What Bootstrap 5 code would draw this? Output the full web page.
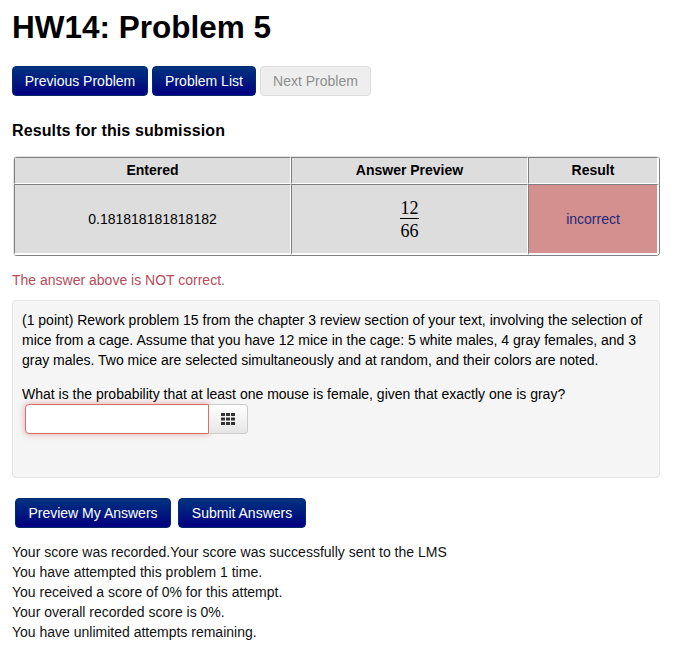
<!DOCTYPE html>
<html lang="en"><head><meta charset="utf-8"><title>HW14: Problem 5</title>
<link href="https://cdn.jsdelivr.net/npm/bootstrap@5.3.0/dist/css/bootstrap.min.css" rel="stylesheet">
<style>
body{font-family:"Liberation Sans",Arial,sans-serif;font-size:14px;line-height:20px;color:#000;background:#fff;padding:0 12px;overflow:hidden}
.hw-title{font-family:"Liberation Sans",sans-serif;font-size:31.5px;line-height:40px;font-weight:700;margin:7px 0 19px}
.hw-btn{font-size:14px;line-height:20px;padding:4px 0;border-radius:4px;border:1px solid #002a6c;color:#fff;background:linear-gradient(#00337f,#00007f)}
.hw-btn:hover{color:#fff}
.hw-off{color:#8f8f8f;background:#eee;border-color:#ddd}
.w-prev{width:136px}.w-list{width:104px}.w-next{width:111px}.w-prevw{width:156px}.w-sub{width:128px}
.nav-gap{gap:4px}
.res-head{font-size:16px;line-height:20px;font-weight:700;margin:25px 0 15px;letter-spacing:.12px}
.res-tbl{width:647px;margin-left:1px;border-collapse:separate;border-spacing:0;border:1px solid;border-color:#e4e4e4 #808080 #808080 #e4e4e4;border-radius:4px;overflow:hidden;background:#fff;table-layout:fixed}
.res-tbl th,.res-tbl td{text-align:center;vertical-align:middle;background:#ddd;background-clip:padding-box;border-style:solid;border-color:#808080 #fff #fff #808080;border-width:1px;padding:0}
.res-tbl th{height:27px;font-weight:700;padding-bottom:2px}
.res-tbl td{height:71px;border-bottom-width:2px}
.res-tbl th:last-child,.res-tbl td:last-child{border-right-width:2px}
.res-tbl td.bad{background:#d48f8f;color:#1c2a78}
.frac{display:inline-flex;flex-direction:column;align-items:stretch;vertical-align:middle;min-width:19px;font-family:"Liberation Serif",serif;font-size:18px;line-height:20px}
.frac span:first-child{border-bottom:1px solid #000}
.frac span:last-child{padding-top:2px}
.warn-line{color:#b94a58;margin:14px 0 10px}
.prob-box{margin-left:0;width:648px;height:178px;padding:9px 9px 10px;background:#f5f5f5;border:1px solid #e3e3e3;border-radius:4px;font-size:14px;line-height:20px}
.prob-box p:first-child{margin:0 0 14px}
.ans-wrap{margin:0 0 0 3px;width:223px;height:30px}
.ans-in{width:184px;height:30px;border:1px solid #d47070;border-radius:4px 0 0 4px;background:#fff;box-shadow:0 0 6px rgba(212,112,112,.6);padding:0 6px}
.ans-pick{width:39px;height:30px;border:1px solid #ccc;border-left:0;border-radius:0 4px 4px 0;background:linear-gradient(#fff,#e6e6e6)}
.sub-row{gap:7px;margin:20px 0 14px 3px}
.foot-line{margin:0;line-height:20px;color:#111}
</style></head><body>
<h1 class="hw-title">HW14: Problem 5</h1>
<div class="d-flex nav-gap">
<a class="btn hw-btn w-prev" href="#">Previous Problem</a><a class="btn hw-btn w-list" href="#">Problem List</a><a class="btn hw-btn hw-off w-next" href="#">Next Problem</a>
</div>
<h2 class="res-head">Results for this submission</h2>
<table class="res-tbl"><colgroup><col style="width:277px"><col style="width:237px"><col style="width:131px"></colgroup>
<tr><th>Entered</th><th>Answer Preview</th><th>Result</th></tr>
<tr><td>0.181818181818182</td><td><span class="frac"><span>12</span><span>66</span></span></td><td class="bad">incorrect</td></tr></table>
<p class="warn-line">The answer above is NOT correct.</p>
<div class="prob-box">
<p>(1 point) Rework problem 15 from the chapter 3 review section of your text, involving the selection of mice from a cage. Assume that you have 12 mice in the cage: 5 white males, 4 gray females, and 3 gray males. Two mice are selected simultaneously and at random, and their colors are noted.</p>
<p class="mb-0">What is the probability that at least one mouse is female, given that exactly one is gray?</p>
<div class="ans-wrap d-flex"><input class="ans-in" type="text" aria-label="answer"><span class="ans-pick d-flex align-items-center justify-content-center"><svg width="14" height="12" viewBox="0 0 14 12" aria-hidden="true"><path fill="#333" d="M0 0h4v3H0zM5 0h4v3H5zM10 0h4v3h-4zM0 4.500h4v3H0zM5 4.500h4v3H5zM10 4.500h4v3h-4zM0 9h4v3H0zM5 9h4v3H5zM10 9h4v3h-4z"/></svg></span></div>
</div>
<div class="d-flex sub-row"><button class="btn hw-btn w-prevw">Preview My Answers</button><button class="btn hw-btn w-sub">Submit Answers</button></div>
<p class="foot-line">Your score was recorded.Your score was successfully sent to the LMS</p>
<p class="foot-line">You have attempted this problem 1 time.</p>
<p class="foot-line">You received a score of 0% for this attempt.</p>
<p class="foot-line">Your overall recorded score is 0%.</p>
<p class="foot-line">You have unlimited attempts remaining.</p>
<script src="https://cdn.jsdelivr.net/npm/bootstrap@5.3.0/dist/js/bootstrap.bundle.min.js"></script>
</body></html>
